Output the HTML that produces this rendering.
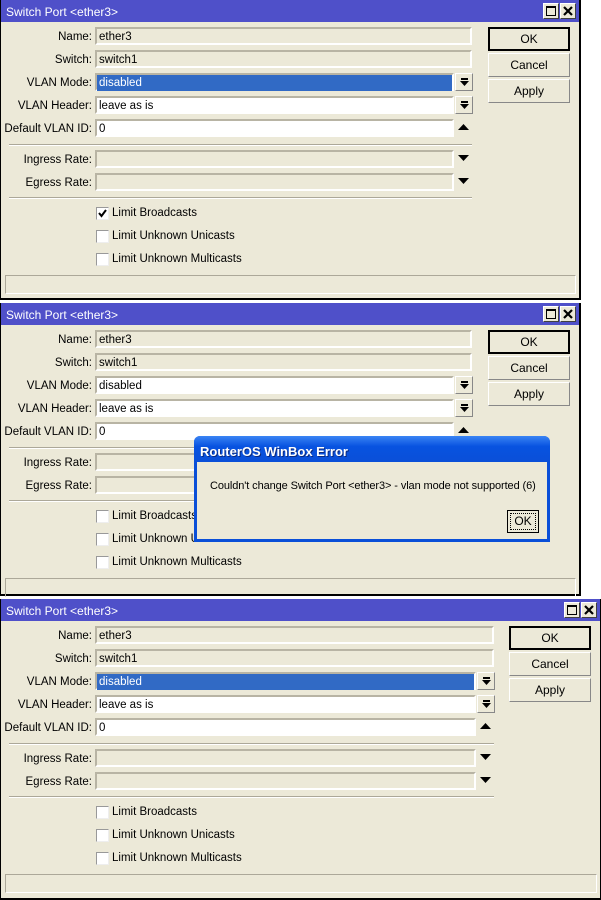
<!DOCTYPE html>
<html><head><meta charset="utf-8"><style>
*{box-sizing:border-box;margin:0;padding:0}
body{width:601px;height:900px;background:#fff;position:relative;overflow:hidden;font-family:"Liberation Sans",sans-serif;font-size:11.5px;color:#000}
.win{position:absolute;left:0;background:#ece9d8;border-left:1px solid #000;border-right:2px solid #000;border-bottom:2px solid #000}
.tb{position:absolute;left:0;right:0;top:0;height:22px;background:#4f50c9;color:#fff;font-size:12px;padding:5px 0 0 5px}
.tbtn{position:absolute;top:3px;width:16px;height:16px;background:#ece9d8;border:1px solid #fff;border-right-color:#404040;border-bottom-color:#404040}
.lbl{position:absolute;width:91px;text-align:right;left:0}
.fld{position:absolute;left:94px;height:18px;border:2px solid #b8b4a4;border-right-color:#fff;border-bottom-color:#fff;padding:2px 2px 0;background:#ece9d8;white-space:nowrap;line-height:13px}
.w{background:#fff}
.sel{background:#316ac5;color:#fff}
.arb{position:absolute;width:18px;height:18px;border:1px solid #fff;border-right-color:#888;border-bottom-color:#888}
.arb svg{position:absolute;left:4px;top:4px}
.tri{position:absolute}
.sep{position:absolute;left:8px;height:2px;border-top:1px solid #aca899;border-bottom:1px solid #fff}
.cb{position:absolute;left:95px;width:13px;height:13px;background:#fff;border:1px solid #999;border-right-color:#eee;border-bottom-color:#eee}
.cbl{position:absolute;left:111px}
.btn{position:absolute;right:9px;width:82px;height:24px;border:1px solid #fff;border-right-color:#888;border-bottom-color:#888;text-align:center;line-height:22px;font-size:12px}
.ok{border:2px solid #000;line-height:20px}
.st{position:absolute;left:4px;right:3px;height:19px;border:1px solid #aca899;border-right-color:#fff;border-bottom-color:#fff}
</style></head><body>

<!-- window 1 -->
<div class="win" style="top:0;width:581px;height:300px">
<div class="tb">Switch Port &lt;ether3&gt;</div>
<div class="tbtn" style="right:20px"><div style="position:absolute;left:2px;top:2px;width:10px;height:10px;border:1px solid #000;border-top-width:2px"></div></div>
<div class="tbtn" style="right:3px"><svg width="14" height="14" style="position:absolute;left:0;top:0"><path d="M3 3L11 11M11 3L3 11" stroke="#000" stroke-width="2.2"/></svg></div>
<div class="lbl" style="top:31px">Name:</div><div class="fld" style="top:27px;right:107px">ether3</div>
<div class="lbl" style="top:54px">Switch:</div><div class="fld" style="top:50px;right:107px">switch1</div>
<div class="lbl" style="top:77px">VLAN Mode:</div><div class="fld w" style="top:73px;right:125px"><span class="sel" style="display:block;margin:-2px -2px 0;padding:2px 2px 1px">disabled</span></div><div class="arb" style="top:73px;right:106px"><svg width="9" height="9"><rect x="1" y="0" width="7" height="2"/><path d="M0 3H9L4.5 8Z"/></svg></div>
<div class="lbl" style="top:100px">VLAN Header:</div><div class="fld w" style="top:96px;right:125px">leave as is</div><div class="arb" style="top:96px;right:106px"><svg width="9" height="9"><rect x="1" y="0" width="7" height="2"/><path d="M0 3H9L4.5 8Z"/></svg></div>
<div class="lbl" style="top:123px">Default VLAN ID:</div><div class="fld w" style="top:119px;right:125px">0</div><svg class="tri" style="top:124px;right:110px" width="11" height="7"><path d="M0 6H11L5.5 0Z"/></svg>
<div class="sep" style="top:144px;right:107px"></div>
<div class="lbl" style="top:154px">Ingress Rate:</div><div class="fld" style="top:150px;right:125px"></div><svg class="tri" style="top:155px;right:110px" width="11" height="7"><path d="M0 0H11L5.5 6Z"/></svg>
<div class="lbl" style="top:177px">Egress Rate:</div><div class="fld" style="top:173px;right:125px"></div><svg class="tri" style="top:178px;right:110px" width="11" height="7"><path d="M0 0H11L5.5 6Z"/></svg>
<div class="sep" style="top:197px;right:107px"></div>
<div class="cb" style="top:207px"><svg width="11" height="11"><path d="M2 5L4.5 8L9 2" stroke="#000" stroke-width="2" fill="none"/></svg></div><div class="cbl" style="top:207px">Limit Broadcasts</div>
<div class="cb" style="top:230px"></div><div class="cbl" style="top:230px">Limit Unknown Unicasts</div>
<div class="cb" style="top:253px"></div><div class="cbl" style="top:253px">Limit Unknown Multicasts</div>
<div class="btn ok" style="top:27px">OK</div><div class="btn" style="top:53px">Cancel</div><div class="btn" style="top:79px">Apply</div>
<div class="st" style="top:275px"></div>
</div>

<!-- window 2 -->
<div class="win" style="top:303px;width:581px;height:293px">
<div class="tb">Switch Port &lt;ether3&gt;</div>
<div class="tbtn" style="right:20px"><div style="position:absolute;left:2px;top:2px;width:10px;height:10px;border:1px solid #000;border-top-width:2px"></div></div>
<div class="tbtn" style="right:3px"><svg width="14" height="14" style="position:absolute;left:0;top:0"><path d="M3 3L11 11M11 3L3 11" stroke="#000" stroke-width="2.2"/></svg></div>
<div class="lbl" style="top:31px">Name:</div><div class="fld" style="top:27px;right:107px">ether3</div>
<div class="lbl" style="top:54px">Switch:</div><div class="fld" style="top:50px;right:107px">switch1</div>
<div class="lbl" style="top:77px">VLAN Mode:</div><div class="fld w" style="top:73px;right:125px">disabled</div><div class="arb" style="top:73px;right:106px"><svg width="9" height="9"><rect x="1" y="0" width="7" height="2"/><path d="M0 3H9L4.5 8Z"/></svg></div>
<div class="lbl" style="top:100px">VLAN Header:</div><div class="fld w" style="top:96px;right:125px">leave as is</div><div class="arb" style="top:96px;right:106px"><svg width="9" height="9"><rect x="1" y="0" width="7" height="2"/><path d="M0 3H9L4.5 8Z"/></svg></div>
<div class="lbl" style="top:123px">Default VLAN ID:</div><div class="fld w" style="top:119px;right:125px">0</div><svg class="tri" style="top:124px;right:110px" width="11" height="7"><path d="M0 6H11L5.5 0Z"/></svg>
<div class="sep" style="top:144px;right:107px"></div>
<div class="lbl" style="top:154px">Ingress Rate:</div><div class="fld" style="top:150px;right:125px"></div>
<div class="lbl" style="top:177px">Egress Rate:</div><div class="fld" style="top:173px;right:125px"></div>
<div class="sep" style="top:197px;right:107px"></div>
<div class="cb" style="top:207px"></div><div class="cbl" style="top:207px">Limit Broadcasts</div>
<div class="cb" style="top:230px"></div><div class="cbl" style="top:230px">Limit Unknown Unicasts</div>
<div class="cb" style="top:253px"></div><div class="cbl" style="top:253px">Limit Unknown Multicasts</div>
<div class="btn ok" style="top:27px">OK</div><div class="btn" style="top:53px">Cancel</div><div class="btn" style="top:79px">Apply</div>
<div class="st" style="top:275px"></div>
</div>

<!-- window 3 -->
<div class="win" style="top:599px;width:601px;height:301px;border-right:1px solid #000">
<div class="tb">Switch Port &lt;ether3&gt;</div>
<div class="tbtn" style="right:20px"><div style="position:absolute;left:2px;top:2px;width:10px;height:10px;border:1px solid #000;border-top-width:2px"></div></div>
<div class="tbtn" style="right:3px"><svg width="14" height="14" style="position:absolute;left:0;top:0"><path d="M3 3L11 11M11 3L3 11" stroke="#000" stroke-width="2.2"/></svg></div>
<div class="lbl" style="top:31px">Name:</div><div class="fld" style="top:27px;right:106px">ether3</div>
<div class="lbl" style="top:54px">Switch:</div><div class="fld" style="top:50px;right:106px">switch1</div>
<div class="lbl" style="top:77px">VLAN Mode:</div><div class="fld w" style="top:73px;right:124px"><span class="sel" style="display:block;margin:-2px -2px 0;padding:2px 2px 1px">disabled</span></div><div class="arb" style="top:73px;right:105px"><svg width="9" height="9"><rect x="1" y="0" width="7" height="2"/><path d="M0 3H9L4.5 8Z"/></svg></div>
<div class="lbl" style="top:100px">VLAN Header:</div><div class="fld w" style="top:96px;right:124px">leave as is</div><div class="arb" style="top:96px;right:105px"><svg width="9" height="9"><rect x="1" y="0" width="7" height="2"/><path d="M0 3H9L4.5 8Z"/></svg></div>
<div class="lbl" style="top:123px">Default VLAN ID:</div><div class="fld w" style="top:119px;right:124px">0</div><svg class="tri" style="top:124px;right:109px" width="11" height="7"><path d="M0 6H11L5.5 0Z"/></svg>
<div class="sep" style="top:144px;right:106px"></div>
<div class="lbl" style="top:154px">Ingress Rate:</div><div class="fld" style="top:150px;right:124px"></div><svg class="tri" style="top:155px;right:109px" width="11" height="7"><path d="M0 0H11L5.5 6Z"/></svg>
<div class="lbl" style="top:177px">Egress Rate:</div><div class="fld" style="top:173px;right:124px"></div><svg class="tri" style="top:178px;right:109px" width="11" height="7"><path d="M0 0H11L5.5 6Z"/></svg>
<div class="sep" style="top:197px;right:106px"></div>
<div class="cb" style="top:207px"></div><div class="cbl" style="top:207px">Limit Broadcasts</div>
<div class="cb" style="top:230px"></div><div class="cbl" style="top:230px">Limit Unknown Unicasts</div>
<div class="cb" style="top:253px"></div><div class="cbl" style="top:253px">Limit Unknown Multicasts</div>
<div class="btn ok" style="top:27px">OK</div><div class="btn" style="top:53px">Cancel</div><div class="btn" style="top:79px">Apply</div>
<div class="st" style="top:275px"></div>
</div>

<!-- error dialog -->
<div style="position:absolute;left:194px;top:436px;width:356px;height:106px;background:#0a4fd8;border-radius:6px 6px 0 0">
<div style="position:absolute;left:0;right:0;top:0;height:26px;border-radius:6px 6px 0 0;background:linear-gradient(#3a84f4,#0853e0 40%,#0a4fd8);color:#fff;font-weight:bold;font-size:13px;padding:8px 0 0 6px;text-shadow:1px 1px #0a2a80">RouterOS WinBox Error</div>
<div style="position:absolute;left:3px;right:3px;top:26px;bottom:3px;background:#ece9d8">
<div style="position:absolute;left:13px;top:18px;font-size:11px;white-space:nowrap;letter-spacing:-0.1px">Couldn't change Switch Port &lt;ether3&gt; - vlan mode not supported (6)</div>
<div style="position:absolute;left:310px;top:48px;width:32px;height:23px;border:1px solid #000;text-align:center;line-height:21px;font-size:12px"><div style="position:absolute;inset:2px;border:1px dotted #000"></div>OK</div>
</div></div>
</body></html>
